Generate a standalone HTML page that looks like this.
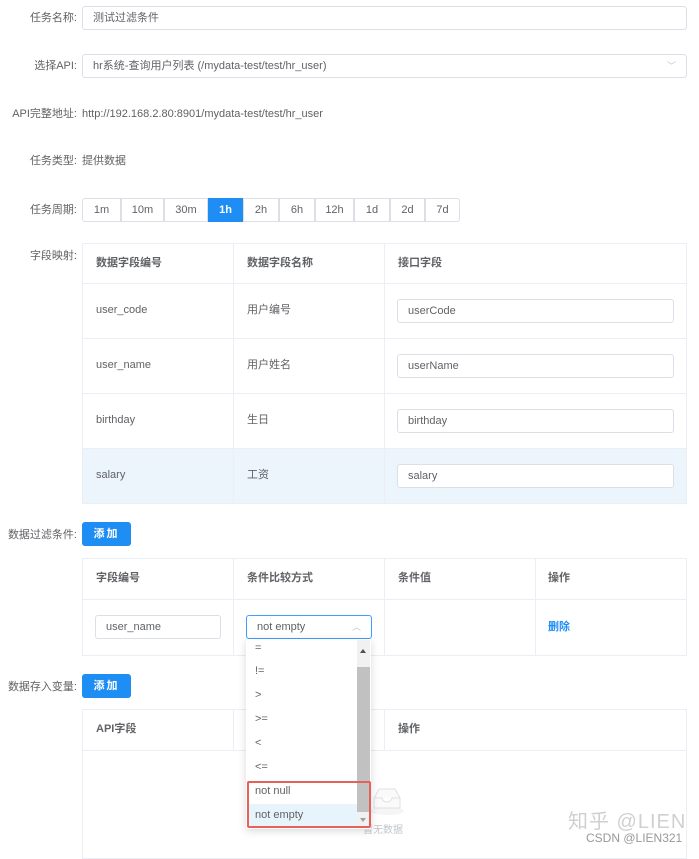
<!DOCTYPE html>
<html><head><meta charset="utf-8"><style>
*{box-sizing:border-box;margin:0;padding:0}
body{width:699px;height:854px;background:#fff;font-family:"Liberation Sans","Noto Sans CJK SC",sans-serif;font-size:11px;line-height:16px;color:#606266;position:relative;overflow:hidden}
.a{position:absolute}
.lbl{position:absolute;right:622px;font-size:11px;color:#606266;white-space:nowrap}
.inp{position:absolute;border:1px solid #dcdfe6;border-radius:3px;background:#fff;padding-left:10px;display:flex;align-items:center;font-size:11px;color:#606266}
.btn{position:absolute;background:#1e8ef5;color:#fff;border-radius:3px;font-size:11px;font-weight:bold;display:flex;align-items:center;justify-content:center;letter-spacing:2px}
.seg{position:absolute;top:198px;height:24px;border:1px solid #dcdfe6;display:flex;align-items:center;justify-content:center;font-size:11px;color:#606266;margin-left:-1px}
.tbl{position:absolute;border:1px solid #ebeef5}
.hl{position:absolute;background:#ebeef5}
.th{position:absolute;font-weight:bold;color:#606266;font-size:11px}
.td{position:absolute;font-size:11px;color:#606266}
.it{position:absolute;left:255px;font-size:11px;color:#606266}
</style></head><body>
<div class="lbl" style="top:10px">任务名称:</div>
<div class="inp" style="left:82px;top:6px;width:605px;height:24px">测试过滤条件</div>
<div class="lbl" style="top:58px">选择API:</div>
<div class="inp" style="left:82px;top:54px;width:605px;height:24px">hr系统-查询用户列表 (/mydata-test/test/hr_user)<span style="position:absolute;right:10px;color:#c0c4cc;font-size:9px">﹀</span></div>
<div class="lbl" style="top:106px">API完整地址:</div>
<div class="a" style="left:82px;top:106px">http://192.168.2.80:8901/mydata-test/test/hr_user</div>
<div class="lbl" style="top:153px">任务类型:</div>
<div class="a" style="left:82px;top:153px">提供数据</div>
<div class="lbl" style="top:202px">任务周期:</div>
<div class="seg" style="left:83px;width:39px;border-radius:3px 0 0 3px">1m</div>
<div class="seg" style="left:122px;width:43px">10m</div>
<div class="seg" style="left:165px;width:44px">30m</div>
<div class="seg" style="left:209px;width:35px;background:#1e8ef5;border-color:#1e8ef5;color:#fff;font-weight:bold">1h</div>
<div class="seg" style="left:244px;width:36px">2h</div>
<div class="seg" style="left:280px;width:36px">6h</div>
<div class="seg" style="left:316px;width:39px">12h</div>
<div class="seg" style="left:355px;width:36px">1d</div>
<div class="seg" style="left:391px;width:35px">2d</div>
<div class="seg" style="left:426px;width:35px;border-radius:0 3px 3px 0">7d</div>

<div class="lbl" style="top:248px">字段映射:</div>
<div class="tbl" style="left:82px;top:243px;width:605px;height:261px"></div>
<div class="a" style="left:83px;top:449px;width:603px;height:54px;background:#ecf5fb"></div>
<div class="hl" style="left:82px;top:283px;width:605px;height:1px"></div>
<div class="hl" style="left:82px;top:338px;width:605px;height:1px"></div>
<div class="hl" style="left:82px;top:393px;width:605px;height:1px"></div>
<div class="hl" style="left:82px;top:448px;width:605px;height:1px"></div>
<div class="hl" style="left:233px;top:243px;width:1px;height:261px"></div>
<div class="hl" style="left:384px;top:243px;width:1px;height:261px"></div>
<div class="th" style="left:96px;top:255px">数据字段编号</div>
<div class="th" style="left:247px;top:255px">数据字段名称</div>
<div class="th" style="left:398px;top:255px">接口字段</div>
<div class="td" style="left:96px;top:302px">user_code</div><div class="td" style="left:247px;top:302px">用户编号</div>
<div class="inp" style="left:397px;top:299px;width:277px;height:24px">userCode</div>
<div class="td" style="left:96px;top:357px">user_name</div><div class="td" style="left:247px;top:357px">用户姓名</div>
<div class="inp" style="left:397px;top:354px;width:277px;height:24px">userName</div>
<div class="td" style="left:96px;top:412px">birthday</div><div class="td" style="left:247px;top:412px">生日</div>
<div class="inp" style="left:397px;top:409px;width:277px;height:24px">birthday</div>
<div class="td" style="left:96px;top:467px">salary</div><div class="td" style="left:247px;top:467px">工资</div>
<div class="inp" style="left:397px;top:464px;width:277px;height:24px">salary</div>

<div class="lbl" style="top:527px">数据过滤条件:</div>
<div class="btn" style="left:82px;top:522px;width:49px;height:24px">添加</div>
<div class="tbl" style="left:82px;top:558px;width:605px;height:98px"></div>
<div class="hl" style="left:82px;top:599px;width:605px;height:1px"></div>
<div class="hl" style="left:233px;top:558px;width:1px;height:98px"></div>
<div class="hl" style="left:384px;top:558px;width:1px;height:98px"></div>
<div class="hl" style="left:535px;top:558px;width:1px;height:98px"></div>
<div class="th" style="left:96px;top:570px">字段编号</div>
<div class="th" style="left:247px;top:570px">条件比较方式</div>
<div class="th" style="left:398px;top:570px">条件值</div>
<div class="th" style="left:548px;top:570px">操作</div>
<div class="inp" style="left:95px;top:615px;width:126px;height:24px">user_name</div>
<div class="inp" style="left:246px;top:615px;width:126px;height:24px;border-color:#409eff">not empty<span style="position:absolute;right:10px;color:#c0c4cc;font-size:9px">︿</span></div>
<div class="a" style="left:548px;top:619px;color:#1e8ef5;font-weight:bold">删除</div>

<div class="lbl" style="top:679px">数据存入变量:</div>
<div class="btn" style="left:82px;top:674px;width:49px;height:24px">添加</div>
<div class="tbl" style="left:82px;top:709px;width:605px;height:150px"></div>
<div class="hl" style="left:82px;top:750px;width:605px;height:1px"></div>
<div class="hl" style="left:233px;top:709px;width:1px;height:41px"></div>
<div class="hl" style="left:384px;top:709px;width:1px;height:41px"></div>
<div class="th" style="left:96px;top:721px">API字段</div>
<div class="th" style="left:398px;top:721px">操作</div>
<svg class="a" style="left:368px;top:784px" width="38" height="32" viewBox="0 0 38 32"><ellipse cx="19" cy="27" rx="17" ry="4" fill="#f5f5f5"/><path d="M6 14 L11 5 H27 L32 14 V24 H6 Z M6 14 H14 Q15 18 19 18 Q23 18 24 14 H32" fill="#fafafa" stroke="#e0e0e0"/></svg>
<div class="a" style="left:363px;top:823px;color:#c0c4cc;font-size:10px">暂无数据</div>

<div class="a" style="left:246px;top:639px;width:125px;height:190px;background:#fff;box-shadow:0 2px 8px rgba(0,0,0,.15)"></div>
<div class="a" style="left:248px;top:804px;width:109px;height:24px;background:#e8f4fc"></div>
<div class="a" style="left:357px;top:640px;width:13px;height:188px;background:#f1f1f1"></div>
<div class="a" style="left:357px;top:667px;width:13px;height:145px;background:#c1c1c1"></div>
<div class="a" style="left:360px;top:649px;width:0;height:0;border:3px solid transparent;border-bottom:4px solid #505050;border-top:0"></div>
<div class="a" style="left:360px;top:818px;width:0;height:0;border:3px solid transparent;border-top:4px solid #a0a0a0;border-bottom:0"></div>
<div class="it" style="top:640px">=</div>
<div class="it" style="top:663px">!=</div>
<div class="it" style="top:687px">&gt;</div>
<div class="it" style="top:711px">&gt;=</div>
<div class="it" style="top:735px">&lt;</div>
<div class="it" style="top:759px">&lt;=</div>
<div class="it" style="top:783px">not null</div>
<div class="it" style="top:807px">not empty</div>
<div class="a" style="left:247px;top:781px;width:124px;height:47px;border:2px solid #e8605a;border-radius:2px"></div>

<div class="a" style="left:568px;top:810px;font-size:20px;line-height:24px;color:#d0d0d0;letter-spacing:1px">知乎 @LIEN</div>
<div class="a" style="left:586px;top:830px;font-size:12px;color:#999">CSDN @LIEN321</div>
</body></html>
